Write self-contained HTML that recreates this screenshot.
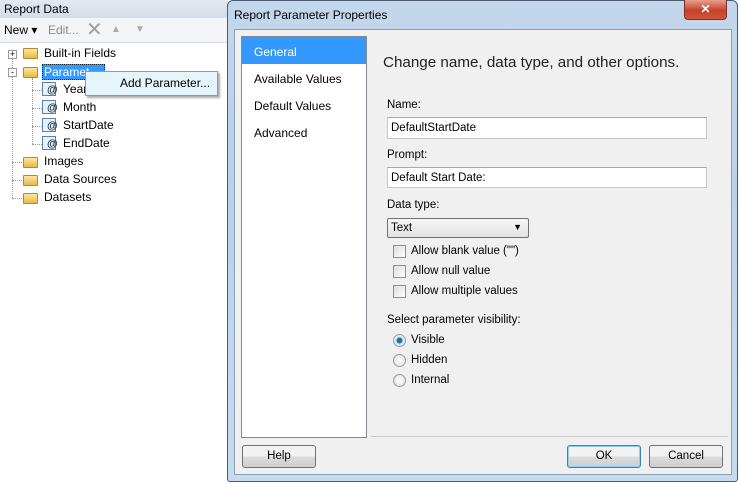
<!DOCTYPE html>
<html><head><style>
*{margin:0;padding:0;box-sizing:border-box}
body{width:740px;height:483px;position:relative;overflow:hidden;background:#fff;font-family:"Liberation Sans",sans-serif;font-size:11.5px;color:#000}
.a{position:absolute;white-space:nowrap}
.fold{position:absolute;width:15px;height:11px;background:linear-gradient(#fbe8a0,#e8b948);border:1px solid #b68a2c;border-radius:1px}
.pi{position:absolute;width:14px;height:14px;border:1px solid #5a7fb8;background:#e8f0fb}
.pi:after{content:"@";position:absolute;left:4px;top:1px;font-size:11px;color:#234;font-weight:bold}
.inp{position:absolute;background:#fff;border:1px solid #c8c8c8;border-top-color:#a9a9a9;padding:4px 0 0 3px;font-size:11.5px}
.cb{position:absolute;width:13px;height:13px;border:1px solid #8e8f8f;background:linear-gradient(135deg,#ddd,#fff)}
.rb{position:absolute;width:13px;height:13px;border:1px solid #9a9a9a;border-radius:50%;background:radial-gradient(#fff,#ddd)}
.btn{position:absolute;height:23px;border:1px solid #707070;border-radius:3px;background:linear-gradient(#f2f2f2 50%,#dcdcdc 50%,#cfcfcf);text-align:center;line-height:21px;font-size:11.5px}
</style></head><body>
<div class="a" style="left:0;top:0;width:228px;height:18px;background:linear-gradient(#e3e9f1,#d5dde8);"></div>
<div class="a" style="left:4px;top:2px;font-size:12px">Report Data</div>
<div class="a" style="left:0;top:18px;width:228px;height:25px;background:#f3f5f8;border-bottom:1px solid #d4d9e0"></div>
<div class="a" style="left:4px;top:23px;font-size:12px">New ▾</div>
<div class="a" style="left:48px;top:23px;font-size:12px;color:#8a8a8a">Edit...</div>
<div class="a" style="left:86px;top:17px;font-size:20px;color:#a0a0a0">✕</div>
<div class="a" style="left:111px;top:24px;font-size:10px;color:#aaa">▲</div>
<div class="a" style="left:135px;top:24px;font-size:10px;color:#aaa">▼</div>
<div class="a" style="left:12px;top:58px;height:140px;border-left:1px dotted #999"></div>
<div class="a" style="left:32px;top:78px;height:66px;border-left:1px dotted #999"></div>
<div class="a" style="left:12px;top:162px;width:10px;border-top:1px dotted #999"></div>
<div class="a" style="left:12px;top:180px;width:10px;border-top:1px dotted #999"></div>
<div class="a" style="left:12px;top:198px;width:10px;border-top:1px dotted #999"></div>
<div class="a" style="left:32px;top:90px;width:10px;border-top:1px dotted #999"></div>
<div class="a" style="left:32px;top:108px;width:10px;border-top:1px dotted #999"></div>
<div class="a" style="left:32px;top:126px;width:10px;border-top:1px dotted #999"></div>
<div class="a" style="left:32px;top:144px;width:10px;border-top:1px dotted #999"></div>
<div class="a" style="left:8px;top:50px;width:9px;height:9px;border:1px solid #999;background:#fff;font-size:9px;line-height:7px;text-align:center">+</div>
<div class="a" style="left:8px;top:68px;width:9px;height:9px;border:1px solid #999;background:#fff;font-size:9px;line-height:6px;text-align:center">-</div>
<div class="fold" style="left:23px;top:48px"></div><div class="a" style="left:44px;top:46px;font-size:12px">Built-in Fields</div>
<div class="fold" style="left:23px;top:67px"></div>
<div class="a" style="left:42px;top:64px;width:63px;height:16px;background:#3399ff;border:1px dotted #222"></div>
<div class="a" style="left:44px;top:65px;font-size:12px;color:#fff">Paramet</div>
<div class="pi" style="left:42px;top:82px"></div><div class="a" style="left:63px;top:82px;font-size:12px">Year</div>
<div class="pi" style="left:42px;top:100px"></div><div class="a" style="left:63px;top:100px;font-size:12px">Month</div>
<div class="pi" style="left:42px;top:118px"></div><div class="a" style="left:63px;top:118px;font-size:12px">StartDate</div>
<div class="pi" style="left:42px;top:136px"></div><div class="a" style="left:63px;top:136px;font-size:12px">EndDate</div>
<div class="a" style="left:85px;top:71px;width:133px;height:25px;background:#e6f4fb;border:1px solid #8a9ab0;box-shadow:2px 2px 2px #aaa"></div>
<div class="a" style="left:120px;top:76px;font-size:12px">Add Parameter...</div>
<div class="fold" style="left:23px;top:157px"></div><div class="a" style="left:44px;top:154px;font-size:12px">Images</div>
<div class="fold" style="left:23px;top:175px"></div><div class="a" style="left:44px;top:172px;font-size:12px">Data Sources</div>
<div class="fold" style="left:23px;top:193px"></div><div class="a" style="left:44px;top:190px;font-size:12px">Datasets</div>
<div class="a" style="left:227px;top:0;width:511px;height:482px;background:linear-gradient(#c3d6ec,#b9d1ea 40%,#c7dbef);border:1px solid #4a5b70;border-radius:6px 6px 3px 3px"></div>
<div class="a" style="left:234px;top:8px;font-size:12px">Report Parameter Properties</div>
<div class="a" style="left:684px;top:0;width:43px;height:20px;background:linear-gradient(#e8a08e,#c7412b 55%,#d2573c);border:1px solid #7a3125;border-top:none;border-radius:0 0 4px 4px;color:#fff;text-align:center;font-weight:bold;font-size:12px;line-height:18px">✕</div>
<div class="a" style="left:234px;top:29px;width:498px;height:446px;background:#f0f0f0;border:1px solid #8aa0b8"></div>
<div class="a" style="left:241px;top:36px;width:126px;height:402px;background:#fff;border:1px solid #828790"></div>
<div class="a" style="left:242px;top:37px;width:124px;height:27px;background:#3399ff"></div>
<div class="a" style="left:254px;top:45px;color:#fff;font-size:12px">General</div>
<div class="a" style="left:254px;top:72px;font-size:12px">Available Values</div>
<div class="a" style="left:254px;top:99px;font-size:12px">Default Values</div>
<div class="a" style="left:254px;top:126px;font-size:12px">Advanced</div>
<div class="a" style="left:383px;top:54px;font-size:15.2px;color:#222">Change name, data type, and other options.</div>
<div class="a" style="left:387px;top:99px;font-size:11.5px">Name:</div>
<div class="inp" style="left:387px;top:117px;width:320px;height:22px">DefaultStartDate</div>
<div class="a" style="left:387px;top:149px;font-size:11.5px">Prompt:</div>
<div class="inp" style="left:387px;top:167px;width:320px;height:21px">Default Start Date:</div>
<div class="a" style="left:387px;top:199px;font-size:11.5px">Data type:</div>
<div class="a" style="left:387px;top:218px;width:142px;height:20px;border:1px solid #707070;border-radius:2px;background:linear-gradient(#f6f6f6,#e2e2e2);padding:3px 0 0 3px;font-size:11.5px">Text<span style="position:absolute;right:6px;top:3px;font-size:9px">▼</span></div>
<div class="cb" style="left:393px;top:245px"></div><div class="a" style="left:411px;top:245px">Allow blank value ("")</div>
<div class="cb" style="left:393px;top:265px"></div><div class="a" style="left:411px;top:265px">Allow null value</div>
<div class="cb" style="left:393px;top:285px"></div><div class="a" style="left:411px;top:285px">Allow multiple values</div>
<div class="a" style="left:387px;top:314px">Select parameter visibility:</div>
<div class="rb" style="left:393px;top:334px;background:radial-gradient(#1d6fa0 30%,#cfe3f2 45%,#fff)"></div><div class="a" style="left:411px;top:334px">Visible</div>
<div class="rb" style="left:393px;top:354px"></div><div class="a" style="left:411px;top:354px">Hidden</div>
<div class="rb" style="left:393px;top:374px"></div><div class="a" style="left:411px;top:374px">Internal</div>
<div class="a" style="left:371px;top:436px;width:357px;border-top:1px solid #c8c8c8"></div>
<div class="btn" style="left:242px;top:445px;width:74px">Help</div>
<div class="btn" style="left:567px;top:445px;width:74px;border-color:#3c7fb1;box-shadow:inset 0 0 0 1px #8fd1f4">OK</div>
<div class="btn" style="left:649px;top:445px;width:74px">Cancel</div>
</body></html>
